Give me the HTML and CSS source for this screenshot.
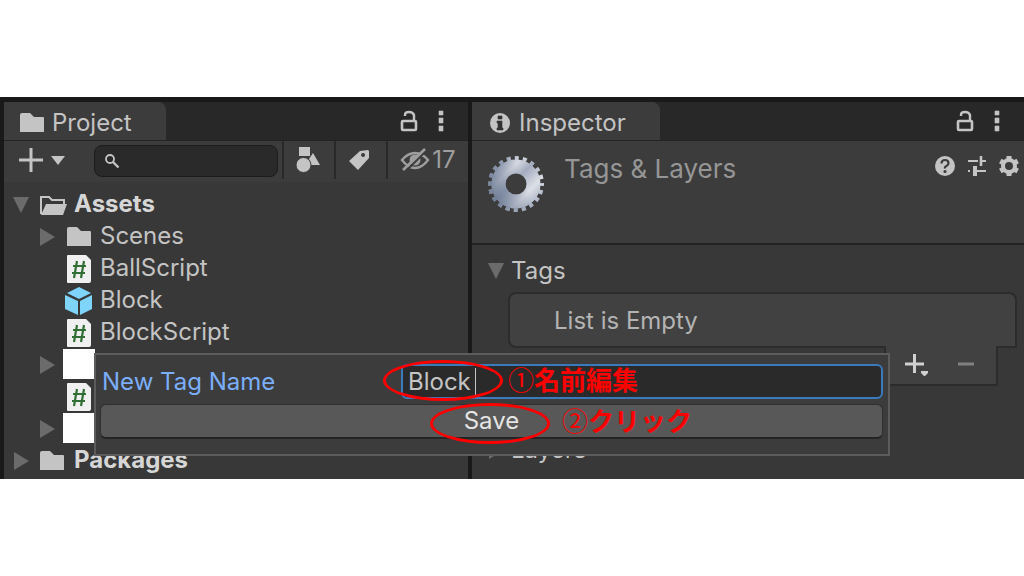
FILE: index.html
```html
<!DOCTYPE html>
<html lang="ja">
  <head>
    <meta charset="UTF-8" />
    <meta name="viewport" content="width=device-width, initial-scale=1.0" />
    <title>Tags &amp; Layers</title>
    <link rel="stylesheet" href="styles.css">
  </head>
  <body>
    <!-- Shared icons -->
    <svg class="symbols" aria-hidden="true">
      <symbol id="folder" viewBox="0 0 27 24"><path d="M1 4a2 2 0 0 1 2-2h8l4 4h9a1 1 0 0 1 1 1v14H1z" fill="#c4c4c4" /></symbol>
      <symbol id="script" viewBox="0 0 27 28">
        <path d="M3 0h18l5 5v21a2 2 0 0 1-2 2H3a1 1 0 0 1-1-1V1a1 1 0 0 1 1-1z" fill="#f0f0f0" />
        <path d="M12 6l-3 17M19 6l-3 17M8 11h13M7 18h13" fill="none" stroke="#2f6f33" stroke-width="2.2" />
      </symbol>
      <symbol id="down" viewBox="0 0 16 16"><path d="M0 0h16L8 16z" fill="#6b6b6b" /></symbol>
      <symbol id="right" viewBox="0 0 16 20"><path d="M1 1v18l15-9z" fill="#6b6b6b" /></symbol>
      <symbol id="lock" viewBox="0 0 18 22">
        <path d="M5 6V5q0-3 4-3t5 3v6" fill="none" stroke="#c4c4c4" stroke-width="2.4" />
        <rect x="2" y="11" width="14" height="9" rx="1" fill="none" stroke="#c4c4c4" stroke-width="2.6" />
      </symbol>
      <symbol id="dots" viewBox="0 0 6 22"><path d="M1 1h4v4H1zM1 8h4v5H1zM1 16h4v5H1z" fill="#c4c4c4" stroke="#c4c4c4" stroke-width="0.6" /></symbol>
    </svg>

    <main class="editor">
      <!-- Project -->
      <section class="panel project">
        <header class="tab-bar">
          <h2 class="tab"><svg class="icon" width="27" height="24"><use href="#folder" /></svg>Project</h2>
          <div class="tab-tools">
            <button class="tool" aria-label="Lock"><svg width="18" height="22"><use href="#lock" /></svg></button>
            <button class="tool" aria-label="Menu"><svg width="6" height="22"><use href="#dots" /></svg></button>
          </div>
        </header>
        <div class="toolbar">
          <button class="tool add" aria-label="Create">
            <svg width="48" height="26" viewBox="0 0 48 26"><path d="M1 13h24M13 1v24" stroke="#c4c4c4" stroke-width="3" /><path d="M33 9h14l-7 9z" fill="#c4c4c4" /></svg>
          </button>
          <label class="search">
            <svg width="16" height="16" viewBox="0 0 16 16"><circle cx="6" cy="6" r="4" fill="none" stroke="#c4c4c4" stroke-width="1.800" /><path d="M9 9l5.500 5.500" stroke="#c4c4c4" stroke-width="2.400" /></svg>
            <input type="text" class="search-input" aria-label="Search" />
          </label>
          <button class="tool cell" aria-label="Search by type">
            <svg width="26" height="28" viewBox="0 0 26 28"><path d="M4 1h11v9H4z M18 7l7 12h-9L14 13z" fill="#c4c4c4" /><circle cx="8.500" cy="19" r="7.500" fill="#c4c4c4" stroke="#3c3c3c" /></svg>
          </button>
          <button class="tool cell" aria-label="Search by label">
            <svg width="24" height="22" viewBox="0 0 24 22"><path fill-rule="evenodd" d="M1 12L12 2l8-1 1 1v7L10 21zM15 4a2 2 0 1 0 .1 0z" fill="#c4c4c4" /></svg>
          </button>
          <button class="tool cell hidden-count">
            <svg width="30" height="24" viewBox="0 0 30 24"><path d="M2 12q6-7 13-7t13 7q-6 8-13 8T2 12z" fill="none" stroke="#9e9e9e" stroke-width="2.400" /><circle cx="15" cy="12" r="5.500" fill="#9e9e9e" /><path d="M5 24L27 2" stroke="#3c3c3c" stroke-width="2" /><path d="M3 22L25 1" stroke="#9e9e9e" stroke-width="2.600" /></svg>17
          </button>
        </div>
        <ul class="tree">
          <li class="row root">
            <span class="arrow"><svg width="16" height="16"><use href="#down" /></svg></span>
            <span class="thumb"><svg width="28" height="22" viewBox="0 0 28 22"><path d="M2 20V3h8l3 3h12v4" fill="none" stroke="#c4c4c4" stroke-width="2" /><path d="M7 10h21l-4 11H2z" fill="#c4c4c4" /></svg></span>
            Assets
          </li>
          <li class="row child">
            <span class="arrow"><svg width="16" height="20"><use href="#right" /></svg></span>
            <span class="thumb"><svg width="27" height="24" viewBox="-1 0 27 24"><path d="M1 4a2 2 0 0 1 2-2h8l4 4h9a1 1 0 0 1 1 1v14H1z" fill="#c4c4c4" /></svg></span>
            Scenes
          </li>
          <li class="row child">
            <span class="arrow"></span>
            <span class="thumb"><svg width="27" height="28"><use href="#script" /></svg></span>
            BallScript
          </li>
          <li class="row child">
            <span class="arrow"></span>
            <span class="thumb"><svg width="27" height="28" viewBox="0 0 27 28"><path d="M14 0l12 6-12 6L2 6z M0 8l13 6v14L0 22z M27 8l-12 6v14l12-6z" fill="#7fd4fc" /></svg></span>
            Block
          </li>
          <li class="row child">
            <span class="arrow"></span>
            <span class="thumb"><svg width="27" height="28"><use href="#script" /></svg></span>
            BlockScript
          </li>
          <li class="row child">
            <span class="arrow"><svg width="16" height="20"><use href="#right" /></svg></span>
            <span class="thumb preview"><span class="blank"></span></span>
          </li>
          <li class="row child">
            <span class="arrow"></span>
            <span class="thumb"><svg width="27" height="28"><use href="#script" /></svg></span>
          </li>
          <li class="row child">
            <span class="arrow"><svg width="16" height="20"><use href="#right" /></svg></span>
            <span class="thumb preview"><span class="blank"></span></span>
          </li>
          <li class="row root">
            <span class="arrow"><svg width="16" height="20"><use href="#right" /></svg></span>
            <span class="thumb"><svg width="27" height="24"><use href="#folder" /></svg></span>
            Packages
          </li>
        </ul>
      </section>

      <!-- Inspector -->
      <section class="panel inspector">
        <header class="tab-bar">
          <h2 class="tab">
            <svg class="icon" width="20" height="20" viewBox="0 0 20 20"><circle cx="10" cy="10" r="10" fill="#c4c4c4" /><path d="M8 3h4v3H8zM7 8h5v7h1v2H7v-2h1v-5H7z" fill="#333" stroke="#333" stroke-width="0.6" /></svg>Inspector
          </h2>
          <div class="tab-tools">
            <button class="tool" aria-label="Lock"><svg width="18" height="22"><use href="#lock" /></svg></button>
            <button class="tool" aria-label="Menu"><svg width="6" height="22"><use href="#dots" /></svg></button>
          </div>
        </header>
        <div class="heading">
          <svg class="cog" width="56" height="56" viewBox="-28 -28 56 56">
            <defs>
              <linearGradient id="steel" gradientUnits="userSpaceOnUse" x1="-20" y1="-20" x2="20" y2="20">
                <stop offset="0" stop-color="#9aa5b9" />
                <stop offset="0.25" stop-color="#d6d9e1" />
                <stop offset="0.45" stop-color="#a3acbf" />
                <stop offset="0.75" stop-color="#dcdfe6" />
                <stop offset="1" stop-color="#aab3c5" />
              </linearGradient>
              <linearGradient id="shade" gradientUnits="userSpaceOnUse" x1="-26" y1="12" x2="8" y2="-4">
                <stop offset="0" stop-color="#66758f" stop-opacity="0.900" />
                <stop offset="1" stop-color="#66758f" stop-opacity="0" />
              </linearGradient>
            </defs>
            <circle r="17.500" fill="none" stroke="url(#steel)" stroke-width="14" />
            <circle r="26" fill="none" stroke="url(#steel)" stroke-width="4" stroke-dasharray="4 4.168" stroke-dashoffset="2" />
            <circle r="17.500" fill="none" stroke="url(#shade)" stroke-width="14" />
            <circle r="26" fill="none" stroke="url(#shade)" stroke-width="4" stroke-dasharray="4 4.168" stroke-dashoffset="2" />
          </svg>
          <h1 class="title">Tags &amp; Layers</h1>
          <div class="heading-tools">
            <button class="tool" aria-label="Help">
              <svg width="20" height="20" viewBox="0 0 20 20"><circle cx="10" cy="10" r="10" fill="#c4c4c4" /><path d="M6.500 7.500Q6.500 4 10 4t3.500 3.200Q13.500 9 11.500 10T10 12.500" fill="none" stroke="#3c3c3c" stroke-width="2.200" /><circle cx="10" cy="15.500" r="1.600" fill="#3c3c3c" /></svg>
            </button>
            <button class="tool" aria-label="Presets">
              <svg width="20" height="20" viewBox="0 0 20 20"><path d="M1 5h10M14 5h5M1 15h2M8 15h11" stroke="#c4c4c4" stroke-width="1.800" /><path d="M14 0v10" stroke="#c4c4c4" stroke-width="2.600" /><path d="M8 10v10" stroke="#c4c4c4" stroke-width="4" /></svg>
            </button>
            <button class="tool" aria-label="Settings">
              <svg width="20" height="20" viewBox="-10 -10 20 20"><circle r="6" fill="none" stroke="#c4c4c4" stroke-width="4" /><path d="M0-6v-4M0 6v4M5.500-3.200L8.700-5M5.500 3.200L8.700 5M-5.500-3.200L-8.700-5M-5.500 3.200L-8.700 5" stroke="#c4c4c4" stroke-width="5" /></svg>
            </button>
          </div>
        </div>
        <div class="settings">
          <h3 class="fold"><svg width="16" height="16"><use href="#down" /></svg>Tags</h3>
          <div class="list">
            <p class="list-body">List is Empty</p>
            <div class="list-footer">
              <button class="tool" aria-label="Add tag">
                <svg width="24" height="24" viewBox="0 0 24 24"><path d="M0 11h19M9.500 1v19" stroke="#d0d0d0" stroke-width="3" /><path d="M16 18h7v2l-3 3h-1l-3-3z" fill="#d0d0d0" /></svg>
              </button>
              <button class="tool" aria-label="Remove tag">
                <svg width="16" height="24" viewBox="0 0 16 24"><path d="M0 11h16" stroke="#808080" stroke-width="3" /></svg>
              </button>
            </div>
          </div>
          <h3 class="fold layers"><svg width="16" height="20"><use href="#right" /></svg>Layers</h3>
        </div>
      </section>

      <!-- New tag popup -->
      <form class="popup">
        <div class="field">
          <label class="field-label" for="tag-name">New Tag Name</label>
          <input type="text" class="field-input" id="tag-name" value="Block" />
        </div>
        <button type="button" class="save">Save</button>
        <span class="caret"></span>
        <span class="ring ring-name"></span>
        <span class="ring ring-save"></span>
        <span class="note note-name"><span class="number">①</span>名前編集</span>
        <span class="note note-save"><span class="number">②</span>クリック</span>
      </form>
    </main>
  </body>
</html>
```
FILE: styles.css
```css
* {
  box-sizing: border-box;
}

body {
  margin: 0;
  min-height: 100vh;
  display: flex;
  align-items: center;
  background: #fff;
  color: #c4c4c4;
  font-family: Inter, "Noto Sans CJK JP", sans-serif;
  font-size: 24px;
  line-height: 32px;
}

h1,
h2,
h3,
p,
ul {
  margin: 0;
  padding: 0;
  font-size: 24px;
  font-weight: 400;
}

svg {
  display: block;
  flex: none;
}

button,
input {
  font: inherit;
  color: inherit;
}

.symbols {
  position: absolute;
  width: 0;
  height: 0;
}

.editor {
  position: relative;
  flex: 1;
  display: grid;
  grid-template-columns: 464fr 552fr;
  gap: 4px;
  padding: 5px 0 0 4px;
  background: #191919;
}

.panel {
  display: flex;
  flex-direction: column;
  min-width: 0;
  background: #383838;
}

.tool {
  display: flex;
  align-items: center;
  justify-content: center;
  padding: 0;
  border: 0;
  background: none;
}

/* Tabs */
.tab-bar {
  display: flex;
  justify-content: space-between;
  height: 38px;
  background: #282828;
}

.tab {
  display: flex;
  align-items: center;
  padding: 4px 34px 0 15px;
  border-radius: 0 8px 0 0;
  background: #3c3c3c;
}

.tab .icon {
  margin-right: 6px;
}

.inspector .tab {
  padding-left: 18px;
}

.inspector .icon {
  margin-right: 9px;
}

.tab-tools {
  display: flex;
  gap: 20px;
  padding-right: 24px;
}

/* Project toolbar */
.toolbar {
  display: flex;
  height: 42px;
  padding-bottom: 3px;
  border-top: 1px solid #232323;
  background: #3c3c3c;
}

.add {
  padding: 0 28px 0 14px;
}

.search {
  display: flex;
  align-items: center;
  flex: 1;
  min-width: 0;
  height: 32px;
  margin: 4px 4px 0 0;
  padding: 0 9px;
  border: 1px solid #1c1c1c;
  border-radius: 8px;
  background: #2a2a2a;
}

.search-input {
  flex: 1;
  min-width: 0;
  border: 0;
  outline: 0;
  background: none;
}

.cell {
  width: 52px;
  padding-right: 2px;
  border-left: 2px solid #292929;
}

.hidden-count {
  width: 82px;
  gap: 2px;
  padding: 0;
  color: #9e9e9e;
}

/* Project tree */
.tree {
  padding: 6px 0 3px;
  list-style: none;
}

.row {
  display: flex;
  align-items: center;
  height: 32px;
  padding-left: 9px;
}

.child {
  padding-left: 35px;
}

.root {
  font-weight: 700;
  color: #d6d6d6;
}

.arrow {
  width: 16px;
  margin-right: 10px;
  padding-top: 2px;
}

.thumb {
  display: flex;
  align-items: center;
  justify-content: center;
  width: 27px;
  height: 32px;
  margin-right: 8px;
  padding-top: 2px;
}

.preview {
  padding: 0;
}

.blank {
  flex: none;
  width: 32px;
  height: 30px;
  background: #fff;
}

/* Inspector */
.heading {
  display: flex;
  align-items: flex-start;
  height: 105px;
  padding: 15px 5px 0 16px;
  border-top: 1px solid #232323;
  border-bottom: 2px solid #232323;
  background: #3c3c3c;
}

.title {
  flex: 1;
  margin-left: 20px;
  font-size: 26px;
  line-height: 26px;
  color: #969696;
}

.heading-tools {
  display: flex;
  gap: 12px;
}

.settings {
  padding: 10px 7px 0 16px;
}

.fold {
  display: flex;
  align-items: center;
  gap: 7px;
}

.list {
  padding: 5px 0 0 20px;
}

.list-body {
  height: 56px;
  padding: 11px 44px;
  border: 2px solid #2c2c2c;
  border-radius: 8px 8px 0 8px;
  background: #414141;
  color: #b4b4b4;
}

.list-footer {
  position: relative;
  display: flex;
  justify-content: space-between;
  width: 114px;
  height: 40px;
  margin: -2px 19px 0 auto;
  padding: 0 22px 0 19px;
  border: solid #2c2c2c;
  border-width: 0 2px 2px;
  background: #414141;
}

.layers {
  margin-top: 48px;
}

/* Popup */
.popup {
  position: absolute;
  top: 256px;
  left: 94px;
  width: 796px;
  padding: 9px 5px 15px 4px;
  border: 2px solid #5c5c5c;
  background: #3c3c3c;
}

.field {
  display: flex;
  align-items: center;
  margin-bottom: 5px;
}

.field-label {
  flex: 1;
  padding-left: 2px;
  color: #7baefa;
}

.field-input {
  width: 482px;
  height: 35px;
  padding: 0 5px;
  border: 2px solid #3a79bb;
  border-radius: 6px;
  outline: 0;
  background: #2a2a2a;
  color: #c4c4c4;
}

.save {
  display: block;
  width: 100%;
  height: 35px;
  padding: 0;
  border: 1px solid #303030;
  border-bottom: 2px solid #242424;
  border-radius: 6px;
  background: #585858;
  color: #e4e4e4;
}

.caret {
  position: absolute;
  top: 13px;
  left: 379px;
  width: 1px;
  height: 28px;
  background: #c4c4c4;
}

/* Red markers */
.ring {
  position: absolute;
  width: 120px;
  height: 41px;
  border: 3px solid #f00;
  border-radius: 50%;
}

.ring-name {
  top: 5px;
  left: 287px;
}

.ring-save {
  top: 48px;
  left: 334px;
}

.note {
  position: absolute;
  color: #f00;
  font-family: "Noto Sans CJK JP", sans-serif;
  font-size: 26px;
  font-weight: 700;
  line-height: 26px;
}

.number {
  font-weight: 400;
}

.note-name {
  top: 11px;
  left: 412px;
}

.note-save {
  top: 52px;
  left: 466px;
}
```
